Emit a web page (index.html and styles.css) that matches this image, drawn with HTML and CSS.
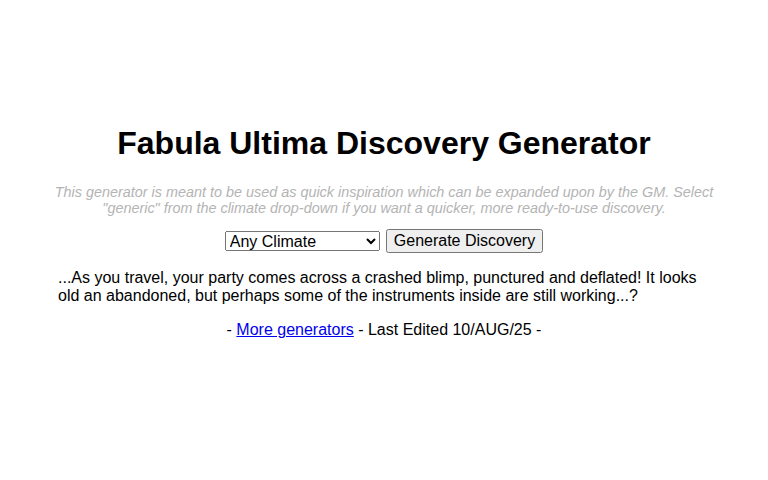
FILE: index.html
```html
<!DOCTYPE html>
<html>
<head>
<meta charset="utf-8">
<link rel="stylesheet" href="styles.css">
</head>
<body>
<main class="page">
  <h1 class="title">Fabula Ultima Discovery Generator</h1>
  <p class="intro">This generator is meant to be used as quick inspiration which can be expanded upon by the GM. Select "generic" from the climate drop-down if you want a quicker, more ready-to-use discovery.</p>
  <div class="controls">
    <select class="climate">
      <option>Any Climate</option>
      <option>Generic</option>
    </select>
    <button class="generate">Generate Discovery</button>
  </div>
  <p class="result">...As you travel, your party comes across a crashed blimp, punctured and deflated! It looks old an abandoned, but perhaps some of the instruments inside are still working...?</p>
  <p class="footer">- <a href="#">More generators</a> - Last Edited 10/AUG/25 -</p>
</main>
</body>
</html>
```
FILE: styles.css
```css
html, body {
  margin: 0;
  background: #fff;
}

body {
  font-family: "Liberation Sans", Arial, sans-serif;
  color: #000;
}

.page {
  width: 680px;
  margin: 0 auto;
  padding-top: 125px;
  display: flex;
  flex-direction: column;
  align-items: center;
}

.title {
  margin: 0;
  font-size: 32px;
  line-height: 37px;
  font-weight: bold;
  text-align: center;
}

.intro {
  margin: 22px 0 0;
  font-size: 14.4px;
  line-height: 16px;
  font-style: italic;
  color: #b4b4b4;
  text-align: center;
}

.controls {
  margin-top: 13px;
  display: flex;
  gap: 6px;
  align-items: center;
}

.climate {
  width: 155px;
  height: 20px;
  font-family: "Liberation Sans", Arial, sans-serif;
  font-size: 16px;
}

.generate {
  font-family: "Liberation Sans", Arial, sans-serif;
  font-size: 16px;
  padding: 1px 6px;
}

.result {
  margin: 16px 0 0;
  width: 652px;
  font-size: 16px;
  line-height: 18px;
  text-align: left;
}

.footer {
  margin: 16px 0 0;
  font-size: 16px;
  line-height: 18px;
  text-align: center;
}

.footer a {
  color: #0000ee;
}
```
